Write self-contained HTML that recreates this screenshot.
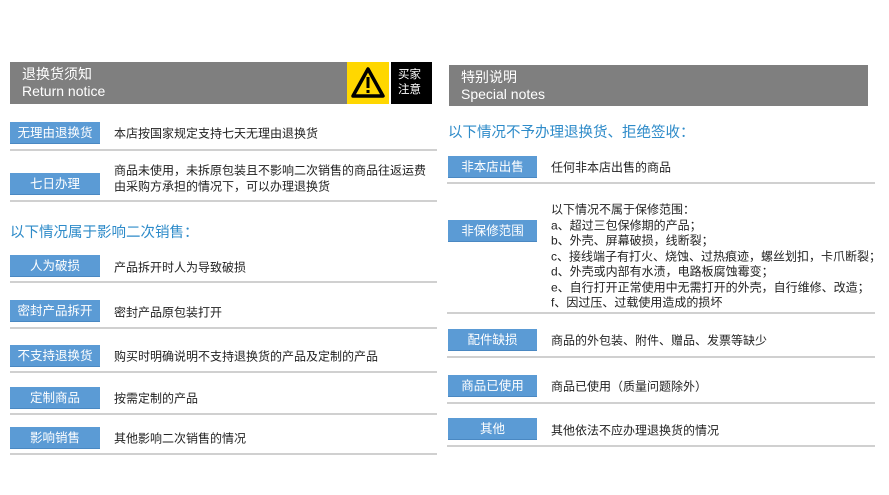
<!DOCTYPE html>
<html><head><meta charset="utf-8"><style>
*{margin:0;padding:0;box-sizing:border-box}
body{width:889px;height:495px;background:#fff;position:relative;overflow:hidden;font-family:"Liberation Sans","Noto Sans CJK SC",sans-serif;color:#222}
.a{position:absolute}
.hd{background:#7f7f7f;color:#fff;font-size:14px;line-height:17px;padding:4px 0 0 12px}
.lb{position:absolute;background:#5b9bd5;color:#fff;font-size:12.5px;text-align:center;line-height:22px;height:22px;border-bottom:1px solid #4a88c2}
.tx{position:absolute;font-size:12px;line-height:15.5px;color:#222;transform:translateY(1.5px)}
.ln{position:absolute;height:2px;background:#d0d0d0}
.tt{position:absolute;color:#2e8bc9;font-size:14.5px}
</style></head><body>
<div class="a hd" style="left:10px;top:62px;width:338px;height:42px">退换货须知<br>Return notice</div>
<div class="a" style="left:347px;top:62px;width:42px;height:42px;background:#ffd700">
<svg width="42" height="42" viewBox="0 0 42 42"><path d="M21 7 L36 34 L6 34 Z" fill="none" stroke="#000" stroke-width="3.5" stroke-linejoin="round"/><rect x="19.5" y="15" width="3" height="11" fill="#000"/><rect x="19.5" y="28" width="3" height="3" fill="#000"/></svg></div>
<div class="a" style="left:391px;top:62px;width:41px;height:42px;background:#000;color:#fff;font-size:11.5px;line-height:15px;padding:6px 0 0 7px">买家<br>注意</div>

<div class="lb" style="left:10px;top:122px;width:90px">无理由退换货</div>
<div class="tx" style="left:114px;top:125px">本店按国家规定支持七天无理由退换货</div>
<div class="ln" style="left:10px;top:149px;width:427px"></div>
<div class="lb" style="left:10px;top:173px;width:90px">七日办理</div>
<div class="tx" style="left:114px;top:162px">商品未使用，未拆原包装且不影响二次销售的商品往返运费<br>由采购方承担的情况下，可以办理退换货</div>
<div class="ln" style="left:10px;top:200px;width:427px"></div>
<div class="tt" style="left:10px;top:221px">以下情况属于影响二次销售：</div>

<div class="lb" style="left:10px;top:255px;width:90px">人为破损</div>
<div class="tx" style="left:114px;top:259px">产品拆开时人为导致破损</div>
<div class="ln" style="left:10px;top:281px;width:427px"></div>
<div class="lb" style="left:10px;top:300px;width:90px">密封产品拆开</div>
<div class="tx" style="left:114px;top:304px">密封产品原包装打开</div>
<div class="ln" style="left:10px;top:327px;width:427px"></div>
<div class="lb" style="left:10px;top:345px;width:90px">不支持退换货</div>
<div class="tx" style="left:114px;top:348px">购买时明确说明不支持退换货的产品及定制的产品</div>
<div class="ln" style="left:10px;top:371px;width:427px"></div>
<div class="lb" style="left:10px;top:387px;width:90px">定制商品</div>
<div class="tx" style="left:114px;top:390px">按需定制的产品</div>
<div class="ln" style="left:10px;top:413px;width:427px"></div>
<div class="lb" style="left:10px;top:427px;width:90px">影响销售</div>
<div class="tx" style="left:114px;top:430px">其他影响二次销售的情况</div>
<div class="ln" style="left:10px;top:453px;width:427px"></div>

<div class="a hd" style="left:449px;top:65px;width:419px;height:41px;padding-left:12px">特别说明<br>Special notes</div>
<div class="tt" style="left:448px;top:121px">以下情况不予办理退换货、拒绝签收：</div>
<div class="lb" style="left:448px;top:156px;width:89px">非本店出售</div>
<div class="tx" style="left:551px;top:159px">任何非本店出售的商品</div>
<div class="ln" style="left:447px;top:182px;width:428px"></div>
<div class="lb" style="left:448px;top:220px;width:89px">非保修范围</div>
<div class="tx" style="left:551px;top:201px">以下情况不属于保修范围：<br>a、超过三包保修期的产品；<br>b、外壳、屏幕破损，线断裂；<br>c、接线端子有打火、烧蚀、过热痕迹，螺丝划扣，卡爪断裂；<br>d、外壳或内部有水渍，电路板腐蚀霉变；<br>e、自行打开正常使用中无需打开的外壳，自行维修、改造；<br>f、因过压、过载使用造成的损坏</div>
<div class="ln" style="left:447px;top:312px;width:428px"></div>
<div class="lb" style="left:448px;top:329px;width:89px">配件缺损</div>
<div class="tx" style="left:551px;top:332px">商品的外包装、附件、赠品、发票等缺少</div>
<div class="ln" style="left:447px;top:356px;width:428px"></div>
<div class="lb" style="left:448px;top:375px;width:89px">商品已使用</div>
<div class="tx" style="left:551px;top:378px">商品已使用（质量问题除外）</div>
<div class="ln" style="left:447px;top:402px;width:428px"></div>
<div class="lb" style="left:448px;top:418px;width:89px">其他</div>
<div class="tx" style="left:551px;top:422px">其他依法不应办理退换货的情况</div>
<div class="ln" style="left:447px;top:445px;width:428px"></div>
</body></html>
